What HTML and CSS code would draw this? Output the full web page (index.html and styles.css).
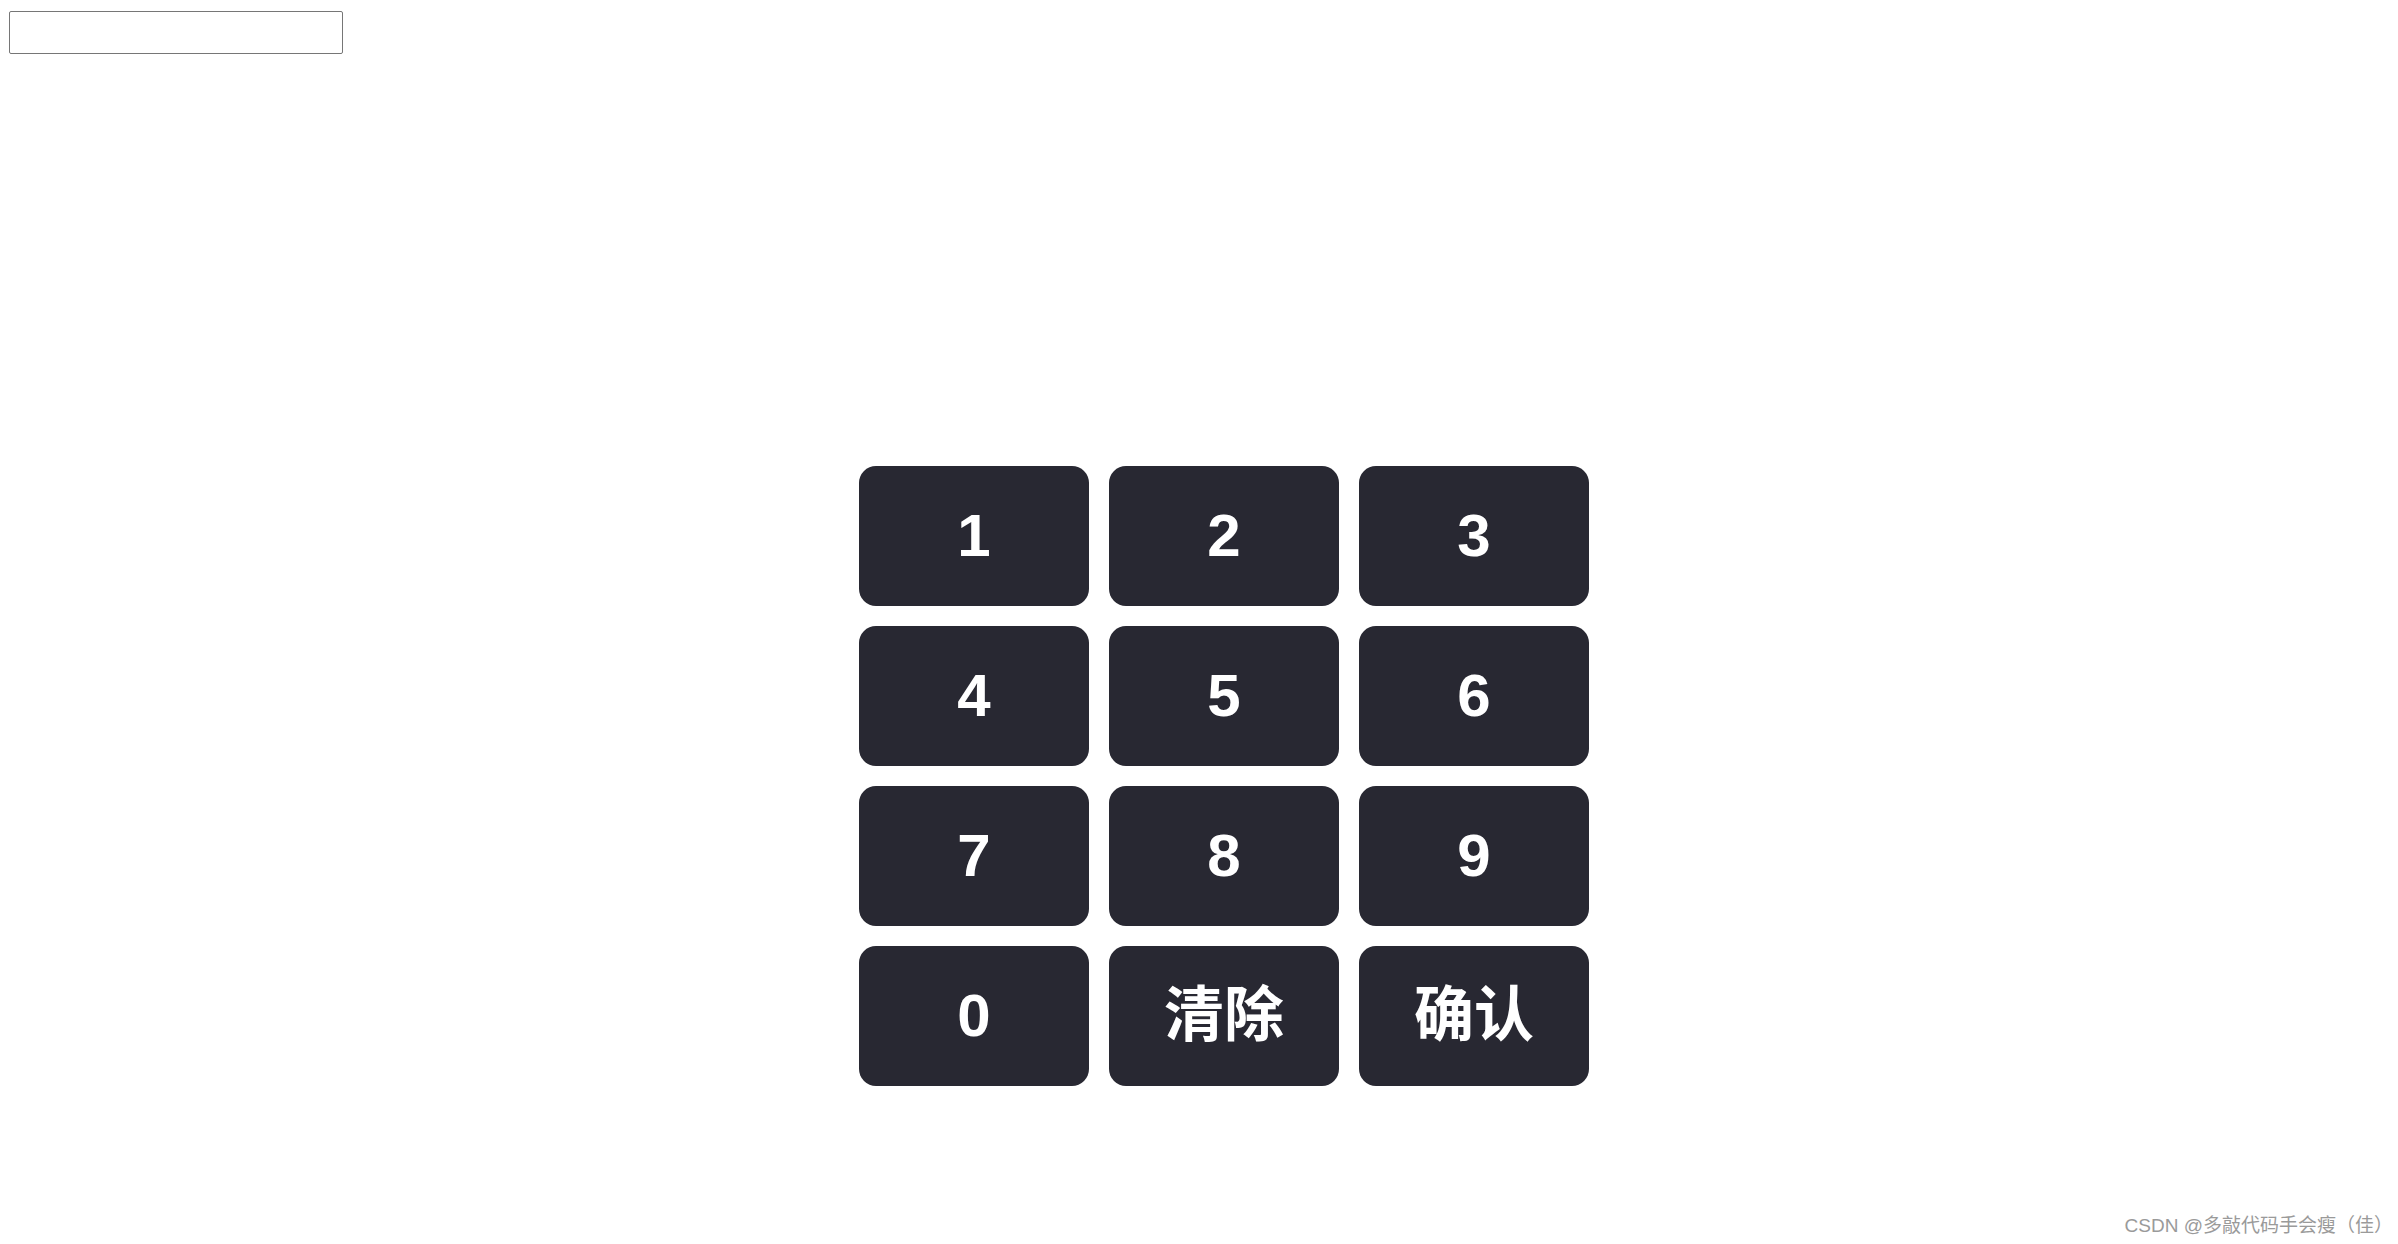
FILE: index.html
```html
<!DOCTYPE html>
<html lang="zh-CN">
<head>
<meta charset="utf-8">
<title>数字键盘</title>
<link rel="stylesheet" href="styles.css">
</head>
<body>
<div class="top">
  <input class="field" type="text">
</div>
<div class="keypad">
  <button class="key">1</button>
  <button class="key">2</button>
  <button class="key">3</button>
  <button class="key">4</button>
  <button class="key">5</button>
  <button class="key">6</button>
  <button class="key">7</button>
  <button class="key">8</button>
  <button class="key">9</button>
  <button class="key">0</button>
  <button class="key">清除</button>
  <button class="key">确认</button>
</div>
<div class="watermark">CSDN @多敲代码手会瘦（佳）</div>
</body>
</html>
```

FILE: styles.css
```css
html, body {
  margin: 0;
  padding: 0;
  background: #ffffff;
}

body {
  width: 2398px;
  height: 1244px;
  position: relative;
  overflow: hidden;
  font-family: "Liberation Sans", "Noto Sans CJK SC", sans-serif;
}

.top {
  padding: 11px 0 0 9px;
  display: flex;
}

.field {
  box-sizing: border-box;
  width: 334px;
  height: 43px;
  margin: 0;
  border: 1px solid #767676;
  border-radius: 2px;
  background: #fff;
  padding: 1px 2px;
  font-size: 13px;
}

.keypad {
  display: grid;
  grid-template-columns: repeat(3, 230px);
  grid-auto-rows: 140px;
  gap: 20px 20px;
  margin: 412px 0 0 859px;
  width: 730px;
}

.key {
  margin: 0;
  padding: 0;
  border: none;
  border-radius: 17px;
  background: #282832;
  color: #ffffff;
  font-family: "Liberation Sans", "Noto Sans CJK SC", sans-serif;
  font-weight: bold;
  font-size: 60px;
  line-height: 1;
  display: flex;
  align-items: center;
  justify-content: center;
}

.watermark {
  position: absolute;
  right: 5px;
  bottom: 7px;
  font-size: 19px;
  line-height: 22px;
  color: #9a9a9a;
  font-family: "Liberation Sans", "Noto Sans CJK SC", sans-serif;
  white-space: nowrap;
}
```
